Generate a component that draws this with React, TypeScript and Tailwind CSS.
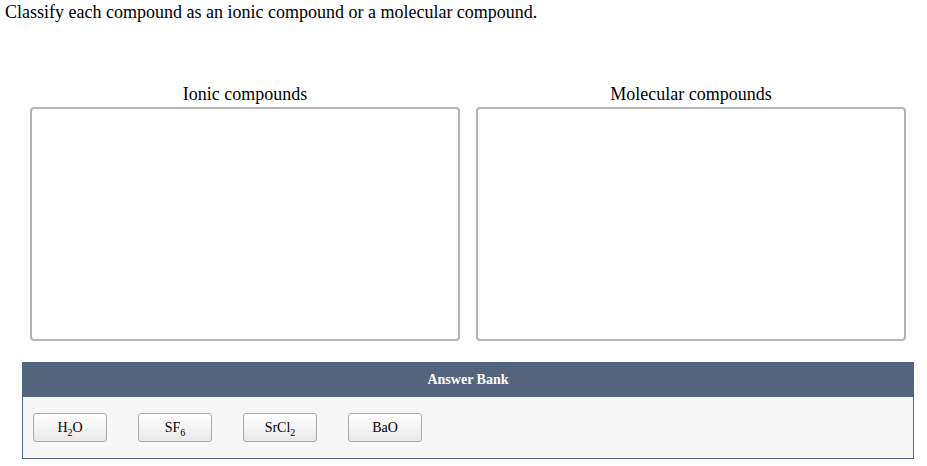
const serif = { fontFamily: '"Liberation Serif", "Times New Roman", serif' };

function Zone({ label }: { label: string }) {
  return (
    <div className="flex w-[430px] flex-col items-center">
      <div className="h-[27px] pt-[3px] text-[18px] leading-[22px] text-black">{label}</div>
      <div className="h-[234px] w-full rounded-[4px] border-2 border-[#b5b5b5] bg-white" />
    </div>
  );
}

function Sub({ children }: { children: React.ReactNode }) {
  return <sub className="bottom-[-0.4em] text-[10px]">{children}</sub>;
}

function Chip({ children }: { children: React.ReactNode }) {
  return (
    <div className="flex h-[29px] w-[74px] items-center justify-center rounded-[3px] border border-[#a9a9a9] bg-gradient-to-b from-white to-[#e9e9e9] text-[14px] text-black">
      <span>{children}</span>
    </div>
  );
}

export default function App() {
  return (
    <div className="h-[466px] w-[927px] bg-white" style={serif}>
      <div className="pl-[5px] pt-[2px] text-[18px] leading-[20px] text-black">
        Classify each compound as an ionic compound or a molecular compound.
      </div>

      <div className="mt-[58px] flex gap-[16px] pl-[30px]">
        <Zone label="Ionic compounds" />
        <Zone label="Molecular compounds" />
      </div>

      <div className="ml-[22px] mt-[21px] w-[892px]">
        <div className="flex h-[35px] items-center justify-center bg-[#52657c] text-[14px] font-bold text-white">
          Answer Bank
        </div>
        <div className="flex h-[62px] items-center gap-[31px] border-x border-b border-[#52657c] bg-[#f7f7f7] pl-[10px]">
          <Chip>
            H<Sub>2</Sub>O
          </Chip>
          <Chip>
            SF<Sub>6</Sub>
          </Chip>
          <Chip>
            SrCl<Sub>2</Sub>
          </Chip>
          <Chip>BaO</Chip>
        </div>
      </div>
    </div>
  );
}
